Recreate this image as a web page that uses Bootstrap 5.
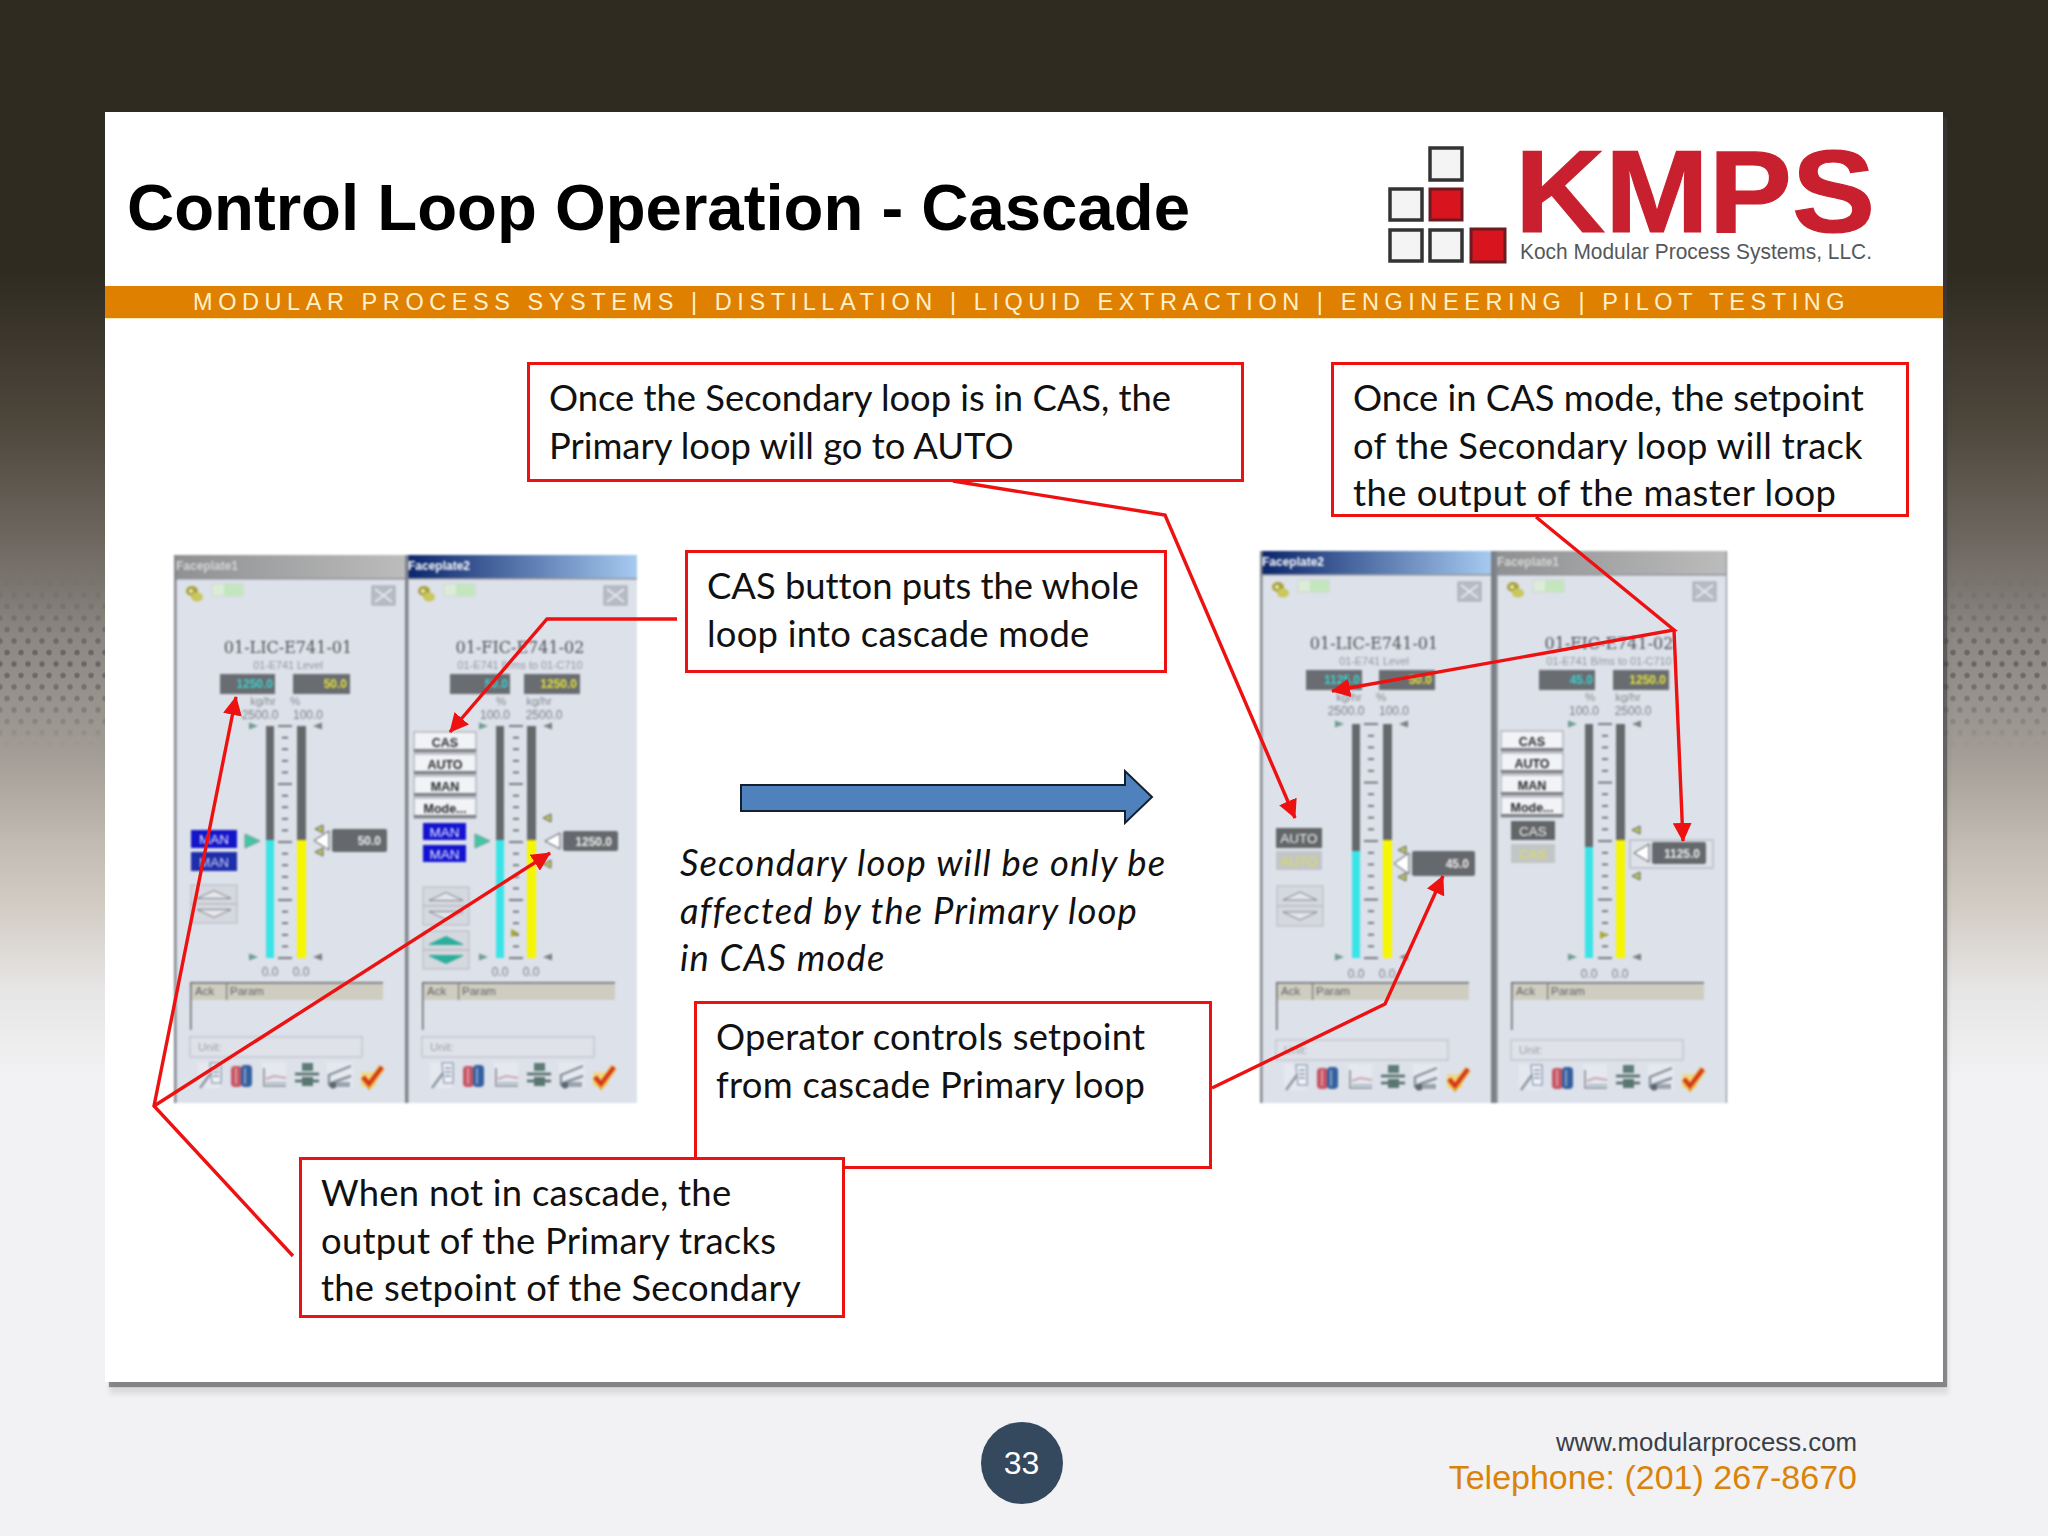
<!DOCTYPE html>
<html lang="en">
<head>
<meta charset="utf-8">
<title>Control Loop Operation - Cascade</title>
<link rel="stylesheet" href="https://cdn.jsdelivr.net/npm/bootstrap@5.3.0/dist/css/bootstrap.min.css">
<style>
html,body{height:100%}
body{width:2048px;height:1536px;overflow:hidden;position:relative;font-family:"Liberation Sans",Arial,sans-serif;
  background:linear-gradient(180deg,#302b20 0,#302b20 270px,#39342a 320px,#4c463b 420px,#6d6760 540px,#8d8883 640px,#a09b94 748px,#c4bdb5 850px,#d3cdc6 910px,#e7e6e6 990px,#f2f2f4 1080px,#f2f2f4 100%)}
.dot-band{position:absolute;left:0;right:0;top:572px;height:176px;
  background-image:radial-gradient(circle,#6b6663 0,#6b6663 1.8px,rgba(107,102,99,0) 3.6px),radial-gradient(circle,#6b6663 0,#6b6663 1.8px,rgba(107,102,99,0) 3.6px);
  background-size:14px 23px;background-position:0 0,7px 11.5px;
  -webkit-mask-image:linear-gradient(180deg,transparent 0,#000 45%,#000 55%,transparent 100%);mask-image:linear-gradient(180deg,transparent 0,#000 45%,#000 55%,transparent 100%)}
.stage{position:relative;width:2048px;height:1536px;padding:112px 105px 0}
.slide-sheet{position:relative;width:1838px;height:1270px;background:#fff;box-shadow:4px 5px 1px rgba(60,60,64,.55),5px 12px 5px rgba(60,60,64,.12)}
.head-row{height:174px;padding:0 38px 0 22px}
.deck-title{font-size:65.3px;font-weight:700;color:#000;margin:0;line-height:1;letter-spacing:0;padding-top:18px}
.logo-art{width:520px;height:150px;display:block;margin-top:-8px}
.tag-band{height:32px;background:#e08000;border-bottom:1px solid #ffe9b4;color:#fff1cc;font-size:23.5px;line-height:33px;letter-spacing:5.57px;padding-left:88px;white-space:nowrap;box-sizing:content-box}
.diagram{position:relative;height:1063px}
.callout{position:absolute;border:3px solid #ee1111;background:#fff;color:#111;font-family:Lato,"Liberation Sans",sans-serif;font-size:36.4px;line-height:47.6px;padding:9px 0 0 19px;white-space:nowrap;letter-spacing:-.02px}
.wide-a{letter-spacing:.25px}
.wide-b{letter-spacing:.45px}
.note-italic{position:absolute;font-family:Lato,"Liberation Sans",sans-serif;font-style:italic;font-size:36.4px;line-height:47.6px;color:#111;white-space:nowrap;letter-spacing:1.15px}
.wires{position:absolute;left:0;top:0;width:1838px;height:1063px;overflow:visible}
.plate-pair{position:absolute;display:block;filter:blur(.8px)}
.plate-pair text{font-family:"Liberation Sans",Arial,sans-serif}
.plate-pair .serif{font-family:"DejaVu Serif","Liberation Serif",serif}
.foot-row{height:154px;padding:0 86px 0 86px;display:grid;grid-template-columns:1fr auto 1fr;align-items:start}
.page-disc{width:82px;height:82px;background:#34495e;color:#fff;font-size:32px;margin-top:40px;margin-left:-5px}
.site-line{font-size:25.8px;line-height:30px;color:#3a3f46;margin-top:45px}
.phone-line{font-size:34px;line-height:40px;color:#d9830a}
</style>
</head>
<body>
<div class="dot-band"></div>
<div class="stage d-flex flex-column">
  <div class="slide-sheet d-flex flex-column">
    <div class="head-row d-flex align-items-center justify-content-between">
      <h1 class="deck-title">Control Loop Operation - Cascade</h1>
      <svg class="logo-art" viewBox="1385 120 520 150" aria-label="KMPS logo">
        <g fill="#f4f4f4" stroke="#333" stroke-width="3.5">
          <rect x="1430" y="148" width="32" height="32"/>
          <rect x="1390" y="189" width="32" height="31"/>
          <rect x="1390" y="230" width="32" height="31"/>
          <rect x="1430" y="230" width="32" height="31"/>
        </g>
        <g fill="#d8141f" stroke="#6d1a20" stroke-width="3">
          <rect x="1430" y="189" width="32" height="31"/>
          <rect x="1471" y="229" width="34" height="33"/>
        </g>
        <text x="1515" y="232" font-size="116" font-weight="700" fill="#c8202e" stroke="#c8202e" stroke-width="1.2" textLength="360" lengthAdjust="spacingAndGlyphs" font-family="Liberation Sans">KMPS</text>
        <text x="1520" y="259" font-size="22" fill="#55575a" textLength="352" lengthAdjust="spacingAndGlyphs" font-family="Liberation Sans">Koch Modular Process Systems, LLC.</text>
      </svg>
    </div>
    <div class="tag-band">MODULAR PROCESS SYSTEMS | DISTILLATION | LIQUID EXTRACTION | ENGINEERING | PILOT TESTING</div>
    <div class="diagram">
      <svg class="plate-pair" id="pairL" style="left:69px;top:236px" width="463" height="548" viewBox="0 0 463 548"></svg>
      <svg class="plate-pair" id="pairR" style="left:1155px;top:232px" width="467" height="552" viewBox="0 0 467 552"></svg>

      <div class="callout" style="left:422px;top:43px;width:717px;height:120px">Once the Secondary loop is in CAS, the<br>Primary loop will go to AUTO</div>
      <div class="callout" style="left:1226px;top:43px;width:578px;height:155px">Once in CAS mode, the setpoint<br><span class="wide-a">of the Secondary loop will track</span><br><span class="wide-b">the output of the master loop</span></div>
      <div class="callout" style="left:580px;top:231px;width:482px;height:123px">CAS button puts the whole<br><span class="wide-a">loop into cascade mode</span></div>
      <div class="callout wide-a" style="left:589px;top:682px;width:518px;height:168px">Operator controls setpoint<br>from cascade Primary loop</div>
      <div class="callout wide-a" style="left:194px;top:838px;width:546px;height:161px">When not in cascade, the<br>output of the Primary tracks<br>the setpoint of the Secondary</div>
      <div class="note-italic" style="left:575px;top:520px">Secondary loop will be only be<br>affected by the Primary loop<br>in CAS mode</div>

      <svg class="wires" viewBox="105 319 1838 1063">
        <defs>
          <marker id="tipred" viewBox="0 0 10 10" refX="9.5" refY="5" markerWidth="19" markerHeight="19" markerUnits="userSpaceOnUse" orient="auto"><path d="M0 0 L10 5 L0 10 Z" fill="#ee1111"/></marker>
        </defs>
        <path d="M741 785H1125V771L1152 797L1125 823V811H741Z" fill="#4f81bd" stroke="#14202e" stroke-width="2"/>
        <g fill="none" stroke="#ee1111" stroke-width="3.4">
          <path d="M953 481L1165 515L1295 818" marker-end="url(#tipred)"/>
          <path d="M677 619H547L450 732" marker-end="url(#tipred)"/>
          <path d="M1536 517L1674 630L1332 691" marker-end="url(#tipred)"/>
          <path d="M1674 630L1683 841" marker-end="url(#tipred)"/>
          <path d="M1212 1088L1385 1004L1443 876" marker-end="url(#tipred)"/>
          <path d="M293 1256L154 1106L236 697" marker-end="url(#tipred)"/>
          <path d="M154 1106L550 853" marker-end="url(#tipred)"/>
        </g>
      </svg>
    </div>
  </div>
  <div class="foot-row">
    <div></div>
    <div class="page-disc rounded-circle d-flex align-items-center justify-content-center">33</div>
    <div class="text-end">
      <div class="site-line">www.modularprocess.com</div>
      <div class="phone-line">Telephone: (201) 267-8670</div>
    </div>
  </div>
</div>
<script src="https://cdn.jsdelivr.net/npm/bootstrap@5.3.0/dist/js/bootstrap.bundle.min.js"></script>
<script>
function tx(x,y,s,size,fill,anchor,extra){return '<text x="'+x+'" y="'+y+'" font-size="'+size+'" fill="'+fill+'" text-anchor="'+(anchor||'start')+'" '+(extra||'')+'>'+s+'</text>';}
function rc(x,y,w,h,fill,extra){return '<rect x="'+x+'" y="'+y+'" width="'+w+'" height="'+h+'" fill="'+fill+'" '+(extra||'')+'/>';}
function arrowBtn(x,y,w,h,col,up){var c=x+w/2,m=y+h/2,p=up?[c-17,m+4,c,m-4,c+17,m+4]:[c-17,m-4,c,m+4,c+17,m-4];
  return rc(x,y,w,h,'#d5d8df','stroke="#b4b7be"')+'<polygon points="'+p.join(' ')+'" fill="'+(col||'#e4e6ec')+'" stroke="'+(col||'#7f828a')+'"/>';}
var gid=0;
function plate(o){
  var g='',id='tb'+(++gid);
  g+='<defs><linearGradient id="'+id+'"><stop offset="0" stop-color="'+o.bar[0]+'"/><stop offset="1" stop-color="'+o.bar[1]+'"/></linearGradient></defs>';
  g+=rc(0,0,231,o.h,'#dde1ea');
  g+=rc(0,0,231,23,'url(#'+id+')')+rc(0,23,231,1.5,'#8e9198');
  g+=rc(0,0,2.5,o.h,'#82868d');
  g+=tx(2,15,o.name,12,o.barText,'start','font-weight="700"');
  g+='<g transform="translate(11,29)"><ellipse cx="7" cy="7" rx="6" ry="5" fill="#a9a33a"/><ellipse cx="12" cy="13" rx="6" ry="4.5" fill="#c9c75e"/><circle cx="6" cy="7" r="2" fill="#e9e9c0"/></g>';
  g+=rc(38,29,31,12,'#dcecd8','stroke="#cdd8cf"')+rc(50,29,19,12,'#c4e6bf');
  g+=rc(198,31,23,19,'#b6bbc5','stroke="#a3a7b0"')+'<path d="M201 34L218 47M218 34L201 47" stroke="#e6e8ee" stroke-width="2"/>';
  g+=tx(114,98,o.tag,16,'#4d5055','middle','class="serif"');
  g+=tx(114,114,o.desc,10.8,'#93979f','middle');
  g+=rc(o.bx1[0],119,o.bx1[1],20,'#696c70')+tx(o.bx1[0]+o.bx1[1]-2,133,o.v1,12,'#3fd0cf','end','font-weight="700"');
  g+=rc(o.bx2[0],119,o.bx2[1],20,'#696c70')+tx(o.bx2[0]+o.bx2[1]-3,133,o.v2,12,'#e2e23e','end','font-weight="700"');
  g+=tx(o.ux1,150,o.u1,11.5,'#85898f','middle')+tx(o.ux2,150,o.u2,11.5,'#85898f','middle');
  g+=tx(o.rx1,164,o.r1,12,'#7d8187','middle')+tx(o.rx2,164,o.r2,12,'#7d8187','middle');
  var t=o.t,b=o.b;
  g+=rc(o.b1,t,8,b-t,'#66696c')+rc(o.b1,o.c1,8,b-o.c1,'#38e4e6');
  g+=rc(o.b2,t,9,b-t,'#66696c')+rc(o.b2,o.c2,9,b-o.c2,'#f6f600');
  for(var i=0;i<=20;i++){var ty=t+i*(b-t)/20,maj=i%5==0;
    g+=rc(maj?o.s-7:o.s-3,ty-.7,maj?14:6,1.5,'#55585c');}
  [t,b-1].forEach(function(v){
    g+='<polygon points="'+(o.b1-17)+','+(v-3.5)+' '+(o.b1-8)+','+v+' '+(o.b1-17)+','+(v+3.5)+'" fill="#6f9c92"/>';
    g+='<polygon points="'+(o.b2+25)+','+(v-3.5)+' '+(o.b2+16)+','+v+' '+(o.b2+25)+','+(v+3.5)+'" fill="#7b8082"/>';
  });
  if(o.btns){o.btns.forEach(function(n,i){var by=o.btnY+i*22;
    g+=rc(o.btnX,by,62,20,'#f2f3f6','stroke="#9a9da4"')+rc(o.btnX,by+17,62,3,'#7d8087');
    g+=tx(o.btnX+31,by+14.5,n,12.5,'#25272b','middle','font-weight="700"');});}
  o.modes.forEach(function(m){
    g+=rc(m.x,m.y,m.w,m.h,m.fill)+tx(m.x+m.w/2,m.y+m.h/2+5,m.t,13.5,m.col,'middle');});
  if(o.tri!==false)g+='<polygon points="'+(o.b1-21)+','+(o.triY-7)+' '+(o.b1-6)+','+o.triY+' '+(o.b1-21)+','+(o.triY+7)+'" fill="#42c6a4" stroke="#6f9c94"/>';
  o.pad.forEach(function(p){
    g+=arrowBtn(17,p.y,46,p.h/2,p.col,true)+arrowBtn(17,p.y+p.h/2,46,p.h/2,p.col,false);});
  var hd=o.hd;
  if(hd.frame)g+=rc(hd.frame[0],hd.y-2,hd.frame[1],hd.h+6,'#dfe2e9','stroke="#a5a9b0"');
  g+=rc(hd.x,hd.y,hd.w,hd.h,'#65686c','rx="2"')+tx(hd.x+hd.w-6,hd.y+hd.h/2+4.5,hd.v,12,'#f0f0f0','end','font-weight="700"');
  g+='<polygon points="'+(hd.x-18)+','+(hd.y+hd.h/2)+' '+(hd.x-3)+','+(hd.y+2)+' '+(hd.x-3)+','+(hd.y+hd.h-2)+'" fill="#fff" stroke="#4d5054"/>';
  hd.sm.forEach(function(p){g+='<polygon points="'+(p[0]+8)+','+(p[1]-4)+' '+p[0]+','+p[1]+' '+(p[0]+8)+','+(p[1]+4)+'" fill="#bcc456" stroke="#5f6262"/>';});
  if(o.bug)g+='<polygon points="'+(o.s-5)+','+(o.bug-4)+' '+(o.s+3)+','+o.bug+' '+(o.s-5)+','+(o.bug+4)+'" fill="#a6a635"/>';
  g+=tx(o.b1+4,o.zeroY,'0.0',12,'#7d8187','middle')+tx(o.b2+4,o.zeroY,'0.0',12,'#7d8187','middle');
  var ty0=o.tblY;
  g+=rc(16,ty0,193,18,'#cfcdc1')+rc(16,ty0,193,1.5,'#6a6b6b')+rc(16,ty0,1.5,48,'#6a6b6b')+rc(52,ty0,1.2,18,'#77787a');
  g+=tx(21,ty0+13,'Ack',11.5,'#5f6164')+tx(56,ty0+13,'Param',11.5,'#5f6164');
  g+=rc(16,o.unitY,172,20,'#dfe2e9','stroke="#b7bac1"')+tx(24,o.unitY+14,'Unit:',11.5,'#a0a3a9');
  var ic=o.icY;
  g+=rc(24,ic,22,26,'#e6e8ef')+rc(88,ic,24,26,'#e6e8ef')+rc(153,ic,26,26,'#e6e8ef');
  g+='<g transform="translate(24,'+ic+')"><path d="M12 1h11v20h-9z" fill="#f2f3f7" stroke="#9aa6bb" stroke-width="1.6"/><path d="M15 6h6M15 10h6M15 14h6" stroke="#7f8ea8" stroke-width="1.4"/><path d="M2 26L13 11" stroke="#8d97a6" stroke-width="2.6"/>'+
    '</g><g transform="translate(56,'+ic+')"><rect x="1" y="4" width="11" height="21" rx="4" fill="#c65463"/><rect x="11" y="3" width="11" height="22" rx="4" fill="#35609f"/><path d="M6 6v16M15 6v16" stroke="#ffffff" stroke-opacity=".4" stroke-width="2"/>'+
    '</g><g transform="translate(88,'+ic+')"><path d="M2 6V24H24" fill="none" stroke="#9a9ea8" stroke-width="2"/><path d="M4 17L12 14L24 16" fill="none" stroke="#c8a6b0" stroke-width="2"/><path d="M4 21H24" stroke="#a9bcc8" stroke-width="2"/>'+
    '</g><g transform="translate(121,'+ic+')"><rect x="7" y="1" width="11" height="8" fill="#5e7d78"/><path d="M0 12H24M0 19H24" stroke="#4d6864" stroke-width="2.4"/><rect x="7" y="15" width="11" height="9" fill="#5a7670"/>'+
    '</g><g transform="translate(153,'+ic+')"><path d="M2 24V13L24 4M24 14L7 20" fill="none" stroke="#85909c" stroke-width="2.4"/><circle cx="6" cy="23" r="3.5" fill="#5b6670"/><rect x="9" y="20" width="14" height="5" fill="#9aa2ac"/>'+
    '</g><g transform="translate(186,'+ic+')"><rect x="1" y="10" width="15" height="14" fill="#efd88a"/><path d="M3 15L9 23L22 5" fill="none" stroke="#e8a828" stroke-width="6.5"/><path d="M3 15L9 22L22 5" fill="none" stroke="#d6301f" stroke-width="3.6"/></g>';
  return '<g transform="translate('+o.x+',0)">'+g+'</g>';
}
var gray=['#8f9092','#bcbcbc'],blue=['#0a246a','#a6caf0'];
var lowL={t:171,b:403,zeroY:421,tblY:427,unitY:482,icY:507};
var lowR={t:173,b:407,zeroY:427,tblY:431,unitY:489,icY:513};
function mix(a,b){return Object.assign({},b,a);}
var L=plate(mix({x:0,h:548,name:'Faceplate1',bar:gray,barText:'#d6d6d6',tag:'01-LIC-E741-01',desc:'01-E741 Level',
  bx1:[46,55],bx2:[119,57],v1:'1250.0',v2:'50.0',ux1:89,ux2:121,u1:'kg/hr',u2:'%',rx1:86,rx2:134,r1:'2500.0',r2:'100.0',
  b1:92,b2:123,c1:285,c2:285,s:111,triY:286,
  modes:[{x:17,y:275,w:46,h:18,fill:'#1414c8',t:'MAN',col:'#e8e8ff'},{x:17,y:297,w:46,h:19,fill:'#1e2eaa',t:'MAN',col:'#d0d4f0'}],
  pad:[{y:330,h:38}],
  hd:{x:158,y:274,w:55,h:23,v:'50.0',sm:[[141,274],[141,297]]}},lowL));
var L2=plate(mix({x:232,h:548,name:'Faceplate2',bar:blue,barText:'#ffffff',tag:'01-FIC-E741-02',desc:'01-E741 B/ms to 01-C710',
  bx1:[44,60],bx2:[118,56],v1:'50.0',v2:'1250.0',ux1:95,ux2:133,u1:'%',u2:'kg/hr',rx1:89,rx2:138,r1:'100.0',r2:'2500.0',
  b1:90,b2:121,c1:285,c2:285,s:110,triY:286,btns:['CAS','AUTO','MAN','Mode...'],btnX:8,btnY:177,bug:378,
  modes:[{x:17,y:268,w:43,h:17,fill:'#1414d0',t:'MAN',col:'#e8e8ff'},{x:17,y:290,w:43,h:17,fill:'#1414d0',t:'MAN',col:'#e8e8ff'}],
  pad:[{y:332,h:38},{y:376,h:38,col:'#2cae9a'}],
  hd:{x:157,y:276,w:55,h:20,v:'1250.0',sm:[[137,263],[137,309]]}},lowL));
document.getElementById('pairL').innerHTML=rc(0,0,463,548,'#7a7f86')+L+L2;
var R=plate(mix({x:0,h:552,name:'Faceplate2',bar:blue,barText:'#ffffff',tag:'01-LIC-E741-01',desc:'01-E741 Level',
  bx1:[46,56],bx2:[119,56],v1:'1125.0',v2:'50.0',ux1:89,ux2:121,u1:'kg/hr',u2:'%',rx1:86,rx2:134,r1:'2500.0',r2:'100.0',
  b1:92,b2:123,c1:300,c2:289,s:111,tri:false,
  modes:[{x:16,y:277,w:46,h:20,fill:'#636668',t:'AUTO',col:'#f2f2f2'},{x:16,y:300,w:46,h:19,fill:'#c2c6c6',t:'AUTO',col:'#dddd55'}],
  pad:[{y:335,h:40}],
  hd:{x:152,y:300,w:63,h:25,v:'45.0',sm:[[138,299],[138,326]]}},lowR));
var R2=plate(mix({x:235,h:552,name:'Faceplate1',bar:gray,barText:'#d6d6d6',tag:'01-FIC-E741-02',desc:'01-E741 B/ms to 01-C710',
  bx1:[44,56],bx2:[118,56],v1:'45.0',v2:'1250.0',ux1:95,ux2:133,u1:'%',u2:'kg/hr',rx1:89,rx2:138,r1:'100.0',r2:'2500.0',
  b1:90,b2:121,c1:296,c2:289,s:110,tri:false,btns:['CAS','AUTO','MAN','Mode...'],btnX:6,btnY:180,bug:384,
  modes:[{x:16,y:270,w:44,h:19,fill:'#636668',t:'CAS',col:'#f2f2f2'},{x:16,y:293,w:44,h:19,fill:'#c2c6c6',t:'CAS',col:'#dddd55'}],
  pad:[],
  hd:{x:157,y:291,w:54,h:22,v:'1125.0',frame:[135,83],sm:[[137,279],[137,325]]}},lowR));
document.getElementById('pairR').innerHTML=rc(0,0,467,552,'#7a7f86')+R+R2;
</script>
</body>
</html>
